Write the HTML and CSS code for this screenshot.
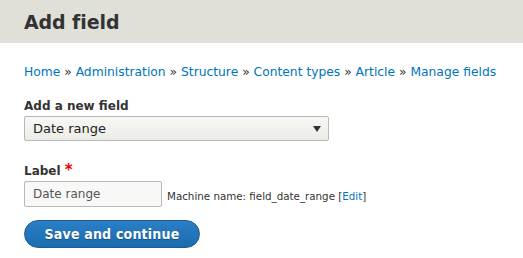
FILE: index.html
```html
<!DOCTYPE html>
<html lang="en">
  <head>
    <meta charset="UTF-8" />
    <title>Add field</title>
    <link rel="stylesheet" href="styles.css">
  </head>
  <body>
    <header class="page-header">
      <h1 class="page-title">Add field</h1>
    </header>

    <main class="content">
      <nav class="breadcrumb">
        <a href="#">Home</a> » <a href="#">Administration</a> »
        <a href="#">Structure</a> » <a href="#">Content types</a> »
        <a href="#">Article</a> » <a href="#">Manage fields</a>
      </nav>

      <form class="field-form">
        <div class="form-item">
          <label class="form-label" for="new-field">Add a new field</label>
          <div class="select-wrap">
            <select id="new-field" class="form-select">
              <option>Date range</option>
            </select>
            <span class="select-arrow"></span>
          </div>
        </div>

        <div class="form-item">
          <label class="form-label" for="label">Label <span class="required">*</span></label>
          <div class="inline-row">
            <input id="label" class="form-text" type="text" placeholder="Date range" />
            <span class="machine-name">Machine name: field_date_range [<a href="#">Edit</a>]</span>
          </div>
        </div>

        <button class="button-primary" type="button">Save and continue</button>
      </form>
    </main>
  </body>
</html>
```

FILE: styles.css
```css
:root {
  --seven-header: #e0e0d8;
  --seven-text: #333333;
  --seven-link: #0074bd;
  --seven-border: #b8b8b8;
  --seven-field: #f8f8f6;
}

* {
  margin: 0;
  padding: 0;
  box-sizing: border-box;
}

body {
  font-family: "DejaVu Sans", Verdana, sans-serif;
  font-size: 12px;
  color: var(--seven-text);
  background: #fff;
}

a {
  color: var(--seven-link);
  text-decoration: none;
}

.page-header {
  background: var(--seven-header);
  height: 43px;
  padding: 0 24px;
  display: flex;
  align-items: center;
}

.page-title {
  font-size: 19px;
  font-weight: 700;
  color: #333;
  letter-spacing: -0.1px;
}

.content {
  padding: 21px 24px 0;
}

.breadcrumb {
  font-size: 12.3px;
  line-height: 16px;
  color: #333;
  white-space: nowrap;
  margin-bottom: 18px;
}

.form-item {
  margin-bottom: 22px;
}

.form-label {
  display: block;
  font-weight: 700;
  font-size: 12px;
  line-height: 16px;
  margin-bottom: 2px;
}

.required {
  color: #e00;
  font-size: 15px;
  line-height: 10px;
}

.select-wrap {
  position: relative;
  width: 305px;
}

.form-select {
  appearance: none;
  width: 100%;
  height: 25px;
  padding: 0 8px;
  font-family: inherit;
  font-size: 13px;
  color: #222;
  border: 1px solid var(--seven-border);
  border-radius: 2px;
  background: linear-gradient(#f7f7f4, #ecece7);
}

.select-arrow {
  position: absolute;
  right: 8px;
  top: 10px;
  border-left: 4px solid transparent;
  border-right: 4px solid transparent;
  border-top: 6px solid #333;
}

.inline-row {
  display: flex;
  align-items: center;
  gap: 5px;
}

.form-text {
  width: 138px;
  height: 26px;
  padding: 0 8px;
  font-family: inherit;
  font-size: 12px;
  border: 1px solid var(--seven-border);
  border-radius: 2px;
  background: var(--seven-field);
}

.form-text::placeholder {
  color: #555;
}

.machine-name {
  font-size: 10.3px;
  color: #333;
  padding-top: 3px;
}

.button-primary {
  display: block;
  width: 176px;
  height: 28px;
  margin-top: -9px;
  border: 1px solid #1e5c90;
  border-radius: 14px;
  background: linear-gradient(#2a7fc6, #1c6bae);
  color: #fff;
  font-family: "DejaVu Sans Condensed", "DejaVu Sans", sans-serif;
  font-size: 14px;
  font-weight: 700;
  letter-spacing: 0.2px;
  text-shadow: 0 1px 1px rgba(0, 0, 0, 0.3);
}
```
